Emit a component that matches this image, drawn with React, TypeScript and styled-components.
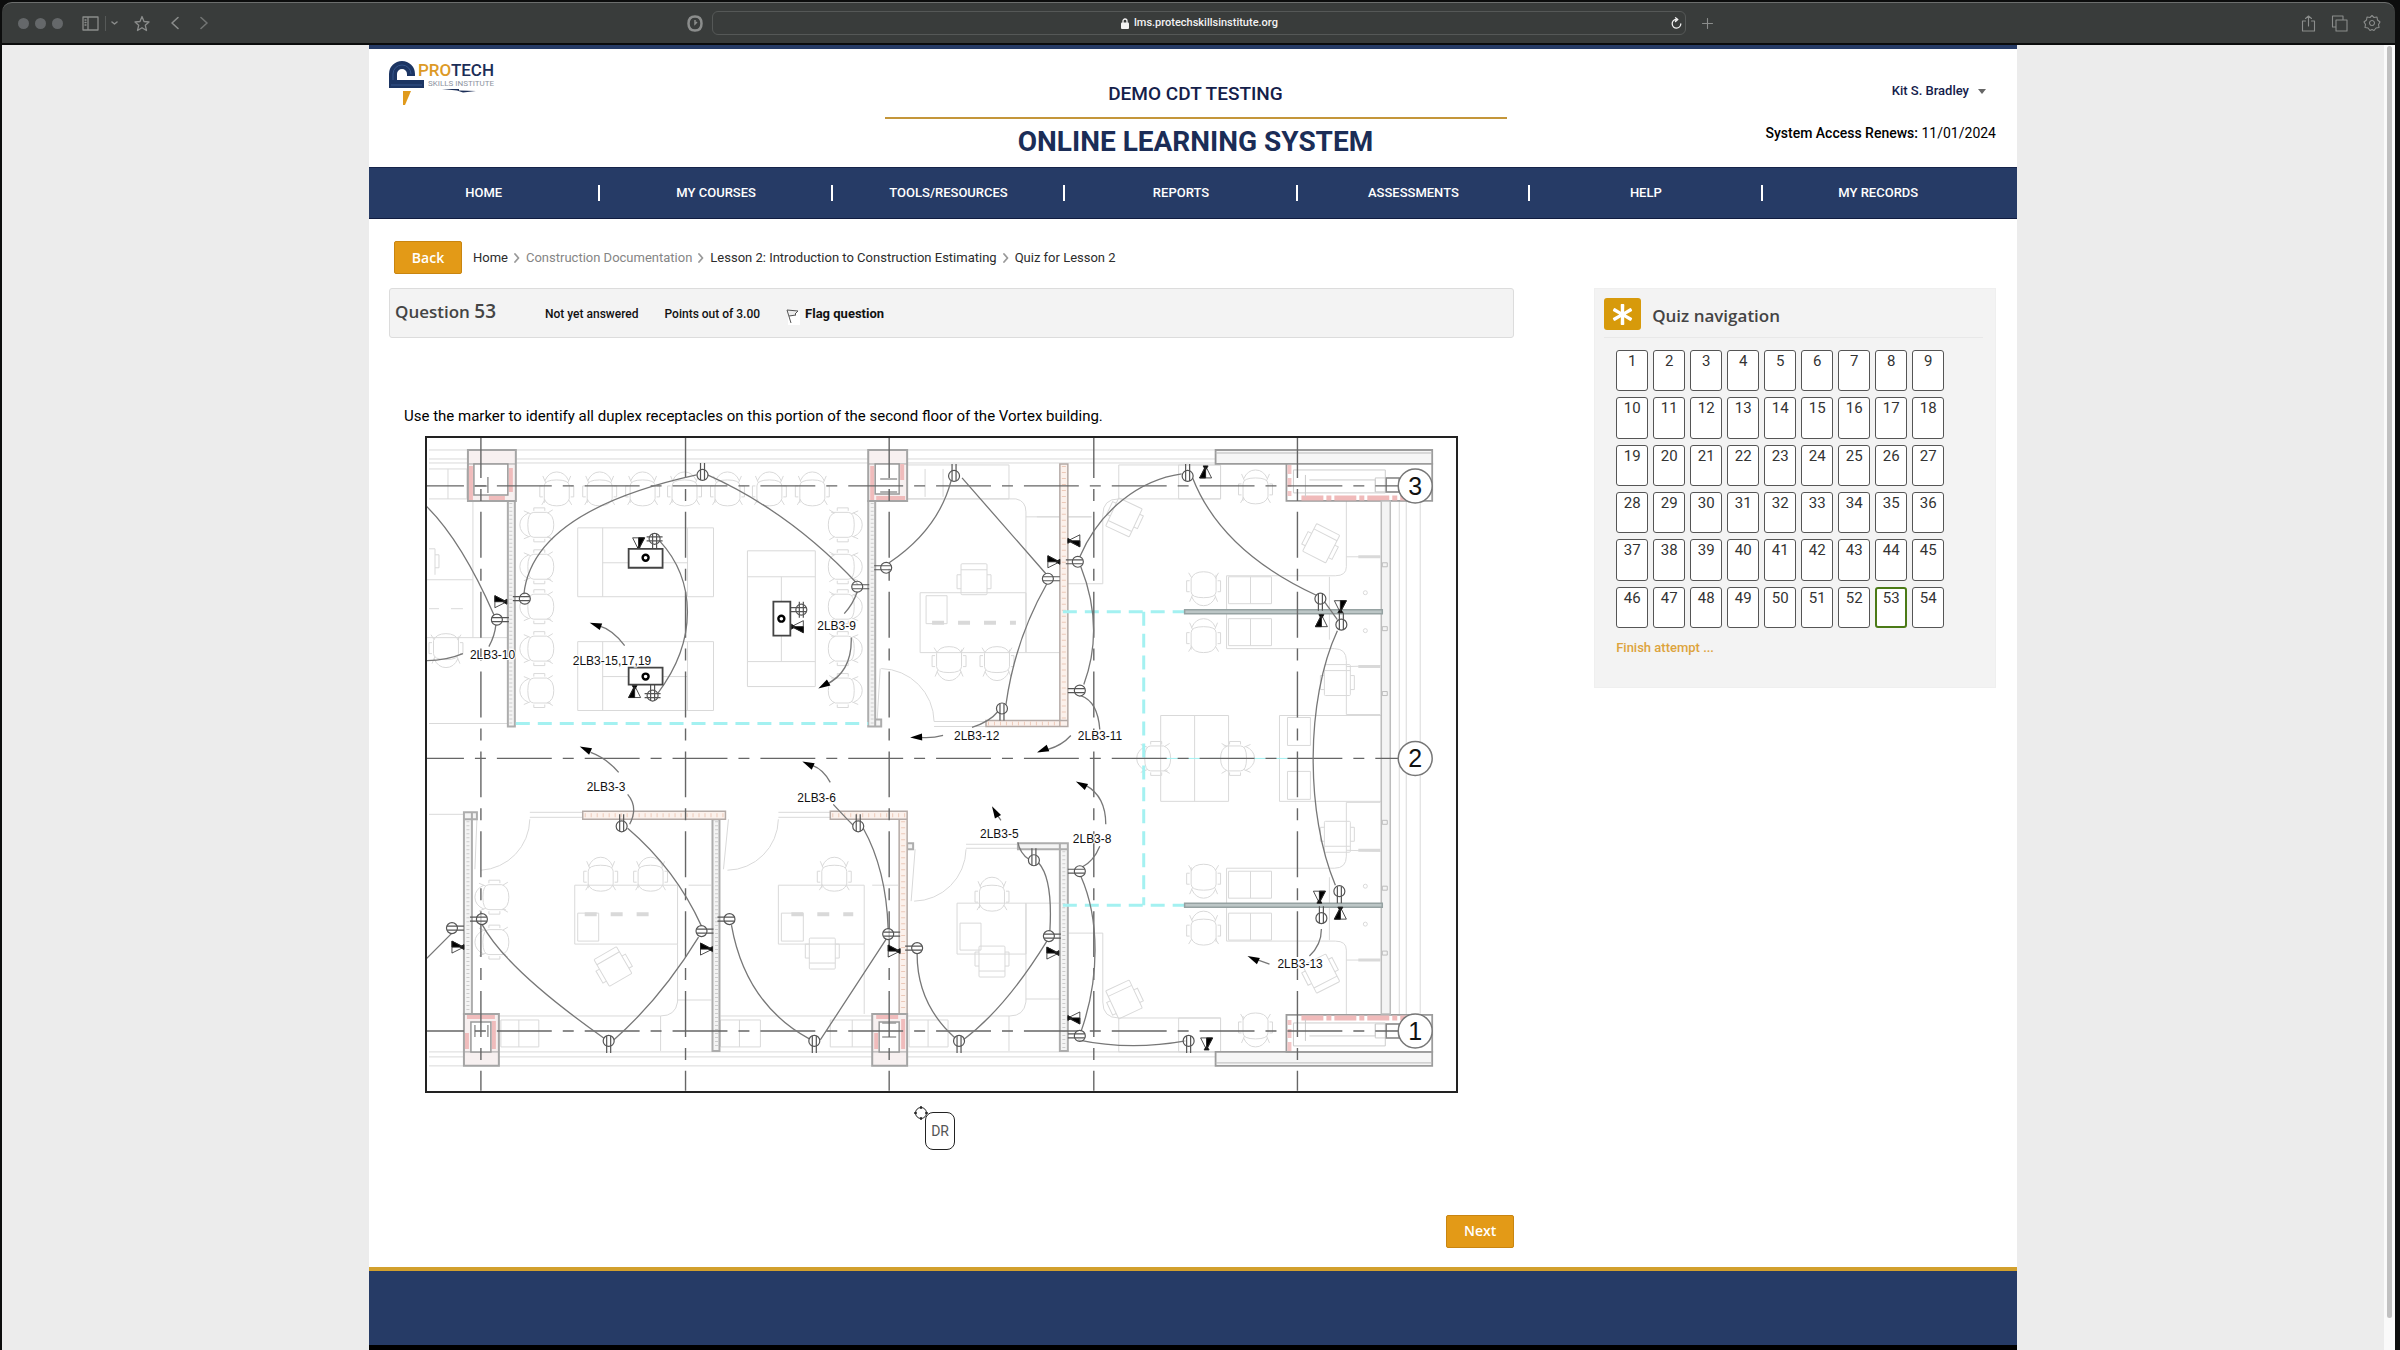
import React from "react";
import styled, { createGlobalStyle } from "styled-components";
import { FaAsterisk } from "react-icons/fa";

const navy = "#263b66";
const ink = "#14204a";
const amber = "#e39a17";
const roboto = `Roboto, "Liberation Sans", sans-serif`;
const openSans = `"Open Sans", "Noto Sans", sans-serif`;

const GlobalStyle = createGlobalStyle`
  *, *::before, *::after { box-sizing: border-box; }
  html, body { margin: 0; padding: 0; background: #0c0d0d; }
  body { font-family: ${roboto}; font-size: 14px; line-height: 20px; color: #222; }
  a { color: inherit; text-decoration: none; }
  button { font: inherit; cursor: pointer; }
  h1, h2, h3, p { margin: 0; }
`;

/* ---------- browser window ---------- */

const Window = styled.div`
  min-height: 100vh;
  padding: 2px 5px 0 2px;
  display: flex;
  flex-direction: column;
`;

const Toolbar = styled.header`
  height: 43px;
  display: grid;
  grid-template-columns: 1fr minmax(0, 1026px) 1fr;
  align-items: center;
  background: #393c3b;
  border-top: 1px solid #6c6e6d;
  border-bottom: 2px solid #0b0c0c;
  border-radius: 10px 10px 0 0;
  padding: 0 14px 0 16px;
  color: #8b8d8c;
`;

const ToolGroup = styled.div<{ $end?: boolean; $gap?: number }>`
  display: flex;
  align-items: center;
  justify-content: ${(p) => (p.$end ? "flex-end" : "flex-start")};
  gap: ${(p) => p.$gap ?? 0}px;
`;

const Dot = styled.span`
  width: 11px;
  height: 11px;
  border-radius: 50%;
  background: #65686a;
`;

const ToolButton = styled.button<{ $before?: number; $dim?: boolean }>`
  display: flex;
  padding: 0;
  border: 0;
  background: none;
  color: inherit;
  margin-left: ${(p) => p.$before ?? 0}px;
  opacity: ${(p) => (p.$dim ? 0.7 : 1)};
`;

const ToolDivider = styled.span`
  width: 1px;
  height: 15px;
  margin-left: 6px;
  background: #565958;
`;

const Address = styled.label`
  flex: 1;
  height: 24px;
  margin: 0 16px 0 9px;
  padding: 0 3px 0 0;
  display: flex;
  align-items: center;
  border: 1px solid #555857;
  border-radius: 6px;
  color: #f2f2f2;
`;

const AddressCentre = styled.span`
  flex: 1;
  display: flex;
  justify-content: center;
  align-items: center;
  gap: 5px;
  padding-left: 20px;
`;

const AddressInput = styled.input`
  width: 148px;
  padding: 0;
  border: 0;
  outline: 0;
  background: none;
  color: inherit;
  font: 500 11px/18px ${roboto};
`;

const Viewport = styled.div`
  flex: 1;
  display: grid;
  grid-template-columns: minmax(0, 1fr) 11px;
  background: #ececec;
`;

const ScrollTrack = styled.div`
  background: #fafafa;
  padding: 1px 3px 32px;
`;

const ScrollThumb = styled.div`
  height: 100%;
  border-radius: 3px;
  background: #c1c1c1;
`;

/* ---------- page ---------- */

const Page = styled.div`
  width: 100%;
  max-width: 1648px;
  margin: 0 auto;
  display: flex;
  flex-direction: column;
  background: #fff;
  border-top: 4px solid ${navy};
  border-bottom: 5px solid #000;
`;

const Masthead = styled.header`
  display: grid;
  grid-template-columns: 1fr minmax(0, 622px) 1fr;
  padding: 0 15px 9px 20px;
`;

const LogoLink = styled.a`
  padding-top: 12px;
  line-height: 0;
`;

const Titles = styled.div`
  padding-top: 33px;
  text-align: center;
`;

const OrgName = styled.h2`
  font: 500 19px/24px ${roboto};
  color: ${ink};
  padding-bottom: 11px;
  border-bottom: 2px solid #c4963a;
  margin-bottom: 7px;
`;

const SystemName = styled.h1`
  font: 700 28px/32px ${roboto};
  color: #1b2d57;
`;

const Account = styled.div`
  display: flex;
  flex-direction: column;
  align-items: flex-end;
  gap: 22px;
  padding: 32px 6px 0 0;
`;

const UserButton = styled.button`
  display: flex;
  align-items: center;
  gap: 9px;
  padding: 0;
  margin-right: 10px;
  border: 0;
  background: none;
  font: 500 13px/20px ${roboto};
  color: ${ink};
`;

const Renewal = styled.p`
  font: 400 14px/20px ${roboto};
  color: #000;
  b { font-weight: 500; }
`;

const NavBar = styled.nav`
  height: 52px;
  display: flex;
  padding-right: 21px;
  background: ${navy};
  border-top: 1px solid #16244a;
  border-bottom: 1px solid #101c40;
`;

const NavItem = styled.a`
  flex: 1;
  display: flex;
  align-items: center;
  font: 500 13px/20px ${roboto};
  color: #fff;
  text-align: center;
  &::after {
    content: "";
    width: 2px;
    height: 16px;
    margin-right: 1px;
    background: #fff;
  }
  &:last-child::after { background: transparent; }
  span { flex: 1; }
`;

const Main = styled.main`
  flex: 1;
  padding: 22px 21px 19px 20px;
`;

const CrumbRow = styled.div`
  display: flex;
  align-items: center;
  gap: 11px;
  padding-left: 5px;
  margin-bottom: 14px;
`;

const Action = styled.button`
  min-width: 68px;
  height: 33px;
  padding: 0 16px;
  border: 1px solid #c98510;
  border-radius: 2px;
  background: ${amber};
  color: #fff;
  font: 600 14px/20px ${openSans};
`;

const Crumbs = styled.ol`
  display: flex;
  align-items: center;
  gap: 6px;
  margin: 0;
  padding: 0;
  list-style: none;
  font: 400 13px/20px ${roboto};
`;

const Crumb = styled.li<{ $muted?: boolean }>`
  display: flex;
  align-items: center;
  gap: 6px;
  color: ${(p) => (p.$muted ? "#858585" : "#2c2c2c")};
  svg { color: #999; }
`;

const Columns = styled.div`
  display: grid;
  grid-template-columns: minmax(0, 2.8fr) minmax(0, 1fr);
  gap: 80px;
  align-items: start;
`;

const QuestionBar = styled.section`
  height: 50px;
  display: flex;
  align-items: center;
  padding: 2px 5px 0;
  background: #f3f3f3;
  border: 1px solid #dcdcdc;
  border-radius: 3px;
  font: 500 12px/20px ${roboto};
  color: #111;
`;

const QuestionTitle = styled.h3`
  width: 150px;
  padding-bottom: 6px;
  font: 600 17px/24px ${openSans};
  color: #444;
  strong { font-size: 19px; font-weight: 600; }
`;

const BarText = styled.span`
  margin-right: 26px;
`;

const FlagButton = styled.button`
  display: flex;
  align-items: center;
  gap: 5px;
  padding: 0;
  border: 0;
  background: none;
  font: 700 13px/20px ${roboto};
  color: #111;
  svg { margin-top: 4px; }
`;

const Prompt = styled.p`
  margin: 68px 0 10px 15px;
  font: 400 15px/20px ${roboto};
  color: #000;
`;

const Figure = styled.figure`
  margin: 0 56px 0 36px;
  border: 2px solid #222;
  line-height: 0;
  svg { width: 100%; height: auto; }
`;

const MarkerHome = styled.div`
  display: flex;
  justify-content: center;
  margin: 13px 56px 65px 36px;
  padding-right: 14px;
`;

const Marker = styled.button`
  display: flex;
  align-items: flex-start;
  padding: 0;
  border: 0;
  background: none;
  cursor: move;
  span {
    width: 30px;
    height: 38px;
    margin: 6px 0 0 -3px;
    border: 1px solid #222;
    border-radius: 8px;
    background: #fff;
    font: 400 14px/36px ${roboto};
    color: #555;
  }
`;

const NextRow = styled.div`
  display: flex;
  justify-content: flex-end;
`;

const QuizPanel = styled.aside`
  padding: 9px 12px 29px 9px;
  background: #f3f3f3;
  border: 1px solid #efefef;
`;

const PanelHead = styled.div`
  display: flex;
  align-items: center;
  gap: 11px;
  padding-bottom: 7px;
  margin-bottom: 12px;
  border-bottom: 1px solid #e8e8e8;
`;

const PanelIcon = styled.span`
  width: 37px;
  height: 32px;
  display: grid;
  place-items: center;
  border-radius: 3px;
  background: #d79a0b;
  color: #fff;
`;

const PanelTitle = styled.h3`
  padding-top: 4px;
  font: 600 17px/24px ${openSans};
  color: #444;
`;

const NumberGrid = styled.div`
  height: 278px;
  display: grid;
  grid-template-columns: repeat(9, 32px);
  grid-auto-rows: 1fr;
  gap: 6px 5px;
  margin: 0 0 9px 12px;
`;

const NumberLink = styled.a<{ $current?: boolean }>`
  border: ${(p) => (p.$current ? "2px solid #4b7a16" : "1px solid #555")};
  padding-top: ${(p) => (p.$current ? 0 : 1)}px;
  border-radius: 3px;
  background: #fff;
  font: 400 15px/18px ${roboto};
  color: #333;
  text-align: center;
`;

const FinishLink = styled.a`
  margin-left: 12px;
  font: 500 13px/20px ${roboto};
  color: #dda33c;
`;

const Footer = styled.footer`
  height: 78px;
  background: ${navy};
  border-top: 4px solid #d2a02d;
`;

/* ---------- floor plan ---------- */

type P = { x: number; y: number };
type Dir = "up" | "right" | "down" | "left";
const turn: Record<Dir, number> = { up: 0, right: 90, down: 180, left: 270 };

const Chair = ({ x, y, d = "up" }: P & { d?: Dir }) => (
  <g transform={`translate(${x} ${y}) rotate(${turn[d]})`}>
    <path d="M-12.5 13V-4Q-12.5-10 0-10T12.5-4V9Q10 16 0 16T-12.5 9" />
    <path d="M-12-9Q-8-18 0-18T12-9M-14-4h-3v11h3M14-4h3v11h-3M-14-14l3 7M14-14l-3 7M-15 15l3-5M15 15l-3-5" />
  </g>
);

const DeskChair = ({ x, y, r = 0 }: P & { r?: number }) => (
  <g transform={`translate(${x} ${y}) rotate(${r})`}>
    <rect x={-13} y={-15} width={26} height={31} rx={1} />
    <path d="M-13-9h26M-13-4h-4v14h4M13-4h4v14h-4" />
  </g>
);

const Outlet = ({ x, y, d, quad }: P & { d: Dir; quad?: boolean }) => (
  <g transform={`translate(${x} ${y}) rotate(${turn[d]})`}>
    <circle r={5.5} />
    <path d="M-2-12V5M2-12V5" />
    {quad && <path d="M-8-2H8M-8 2H8" />}
  </g>
);

const DataJack = ({ x, y, d }: P & { d: Dir }) => (
  <g transform={`translate(${x} ${y}) rotate(${turn[d]})`}>
    <path d="M0-6L-6 6H6Z" fill="#fff" strokeWidth={0.8} />
    <path d="M0-5L-6 6H0ZM-2.500-6H2.500L0-2Z" fill="#000" />
  </g>
);

const Arrow = ({ x, y, a }: P & { a: number }) => (
  <path d="M0 0L12-3.5V3.5Z" transform={`translate(${x} ${y}) rotate(${a})`} fill="#000" stroke="none" />
);

const rect = (x: number, y: number, x2: number, y2: number) => `M${x} ${y}H${x2}V${y2}H${x}Z`;

const chairs: [number, number, Dir?][] = [
  ...[556, 599, 642, 684, 727, 769, 812].map((x) => [x, 490] as [number, number]),
  ...[525, 567, 607, 649, 691].map((y) => [537, y, "left"] as [number, number, Dir]),
  ...[525, 567, 607, 649, 691].map((y) => [844, y, "right"] as [number, number, Dir]),
  [445, 650, "down"], [949, 663, "down"], [997, 663, "down"],
  [600, 876], [650, 876], [834, 876], [992, 896],
  [492, 898, "left"], [492, 943, "left"],
  [1155, 759, "left"], [1237, 759, "right"],
];

const outlets: [number, number, Dir, boolean?][] = [
  [702, 475, "up"], [524, 599, "left"], [496, 620, "right"], [654, 539, "down", true],
  [801, 610, "left", true], [652, 696, "up", true], [857, 587, "right"], [886, 568, "left"],
  [954, 476, "up"], [1188, 476, "up"], [1078, 562, "left"], [1048, 579, "right"],
  [1080, 691, "left"], [1002, 709, "down"], [1321, 599, "down"], [1342, 625, "up"],
  [621, 827, "up"], [858, 827, "up"], [481, 920, "left"], [451, 929, "right"],
  [701, 932, "right"], [729, 920, "left"], [888, 935, "right"], [608, 1042, "down"],
  [814, 1042, "down"], [917, 949, "left"], [959, 1042, "down"], [1034, 861, "up"],
  [1049, 937, "right"], [1080, 872, "left"], [1080, 1037, "left"], [1189, 1042, "down"],
  [1340, 892, "down"], [1322, 919, "up"],
];

const jacks: [number, number, Dir][] = [
  [638, 544, "down"], [500, 602, "right"], [797, 627, "left"], [634, 692, "up"],
  [1206, 472, "up"], [1074, 541, "left"], [1054, 562, "right"], [1322, 621, "up"],
  [1341, 607, "down"], [457, 948, "right"], [706, 950, "right"], [894, 952, "right"],
  [1053, 954, "right"], [1074, 1019, "left"], [1207, 1045, "down"], [1320, 898, "down"],
  [1341, 914, "up"],
];

const arrows: [number, number, number][] = [
  [818, 689, -30], [589, 623, 20], [910, 738, -2], [1037, 753, -22], [579, 747, 25],
  [802, 762, 25], [992, 807, 60], [1076, 782, 28], [1248, 957, 25],
];

const wires = [
  "M523 595C527 555 560 505 696 475", "M707 475Q790 512 858 585", "M857 592Q853 604 844 614",
  "M851 638Q852 672 826 685", "M659 541C695 580 698 640 657 694", "M624 646Q612 630 598 626",
  "M425 506Q460 540 493 615", "M495 625Q494 636 488 647M462 654Q445 661 425 661",
  "M889 563Q938 530 951 481", "M962 478L1046 574", "M1047 584Q1015 640 1006 705",
  "M998 712Q990 722 972 728M943 736Q932 739 920 738", "M1080 557C1100 510 1140 480 1182 474",
  "M1193 478Q1222 552 1318 596", "M1325 602L1338 620", "M1338 631C1306 700 1306 815 1336 886",
  "M1081 567Q1105 628 1084 685", "M1081 696Q1098 702 1100 730M1071 736Q1062 746 1048 750",
  "M627 795Q638 808 629 825M618 773Q606 759 590 753", "M627 829Q675 870 701 927",
  "M481 925Q505 970 603 1039", "M698 938Q660 1000 613 1041", "M731 926Q745 1005 809 1040",
  "M886 940L820 1041", "M863 829Q886 870 888 930", "M833 805Q845 818 853 826M830 783Q823 770 812 766",
  "M451 934L425 960", "M917 955Q917 1005 955 1039", "M1047 942Q1005 1010 963 1041",
  "M1018 843Q1020 854 1029 860M1039 864Q1053 880 1050 932M1001 821L996 814",
  "M1100 847Q1094 862 1082 868M1106 825Q1106 797 1086 786", "M1081 877C1100 920 1100 980 1081 1033",
  "M1078 1041Q1130 1052 1186 1042", "M1322 930Q1322 946 1310 957M1270 965L1256 960",
].join("");

const labels: [number, number, string][] = [
  [469, 659, "2LB3-10"], [572, 665, "2LB3-15,17,19"], [817, 630, "2LB3-9"], [954, 741, "2LB3-12"],
  [1078, 741, "2LB3-11"], [586, 792, "2LB3-3"], [797, 803, "2LB3-6"], [980, 839, "2LB3-5"],
  [1073, 844, "2LB3-8"], [1278, 969, "2LB3-13"],
];

/* Furniture of the open office; its lower half is the same block flipped about grid line 2. */
const OfficeHalf = () => (
  <g>
    <path d={rect(1119, 465, 1221, 499) + rect(1179, 465, 1221, 499) + "M1347 501V567Q1347 576 1336 576H1227V649H1335Q1347 649 1347 661V715M1103 584V515Q1103 499 1119 499M1068 584H1103M1330 577V640"} />
    <path d={rect(1229, 577, 1272, 604) + rect(1229, 619, 1272, 646) + "M1251 577V604M1251 619V646M1347 557H1381M1347 667L1381 666M1347 715H1381"} />
    <path d="M1359 557H1381M1359 667H1381" strokeWidth={3} />
    <path d={rect(1288, 718, 1311, 746)} />
    <circle cx={1366} cy={593} r={2} />
    <circle cx={1366} cy={631} r={2} />
    <Chair x={1204} y={588} d="down" />
    <Chair x={1204} y={637} />
    <Chair x={1256} y={488} />
    <DeskChair x={1124} y={518} r={205} />
    <DeskChair x={1322} y={543} r={27} />
    <DeskChair x={1338} y={680} />
  </g>
);

/* Right-hand exterior wall and corner pier, drawn once and flipped for the lower corner. */
const CornerPier = () => (
  <g>
    <path d={rect(1216, 450, 1433, 464)} fill="#f6f6f6" stroke="#9c9c9c" strokeWidth={1.8} />
    <path d="M1216 453H1433" stroke="#bbb" />
    <path d={rect(1287, 464, 1433, 501)} fill="#fff" stroke="#9c9c9c" strokeWidth={1.8} />
    <path d="M1290 465V496" stroke="#f3c6c6" strokeWidth={4} strokeDasharray="9 4" />
    <path d="M1302 498H1408" stroke="#f0baba" strokeWidth={5} strokeDasharray="22 3 5 3" />
    <path d={rect(1294, 470, 1386, 493) + "M1306 475V497M1310 480H1376V492M1376 478H1400V492H1376Z"} stroke="#ccc" />
    <path d="M1387 478H1400V492H1387Z" stroke="#888" strokeWidth={1.5} />
  </g>
);

const FloorPlan = () => (
  <svg viewBox="426 438 1031 654" role="img" aria-label="Second floor power plan of the Vortex building" fill="none" stroke="#8a8a8a" strokeWidth={1}>
    <g stroke="#d9d9d9">
      <path d="M428 450H1218M428 459H1218M428 463H1218M428 1053H1218M428 1058H1218M428 1067H1218" />
      <path d="M428 724H507M428 815H463M472 501V638M425 580H472M425 638H507M428 469H466V499H428M447 469V499" />
      <path d="M428 609H438M450 609H462M428 549H434V575M434 555H438V568H434" />
      <path d={rect(577, 528, 713, 597) + "M602 528V597M687 528V597M602 563H687"} />
      <path d={rect(577, 642, 713, 711) + "M602 642V711M687 642V711M602 677H687"} />
      <path d={rect(747, 551, 815, 687) + "M747 577H815M747 662H815M781 577V662"} />
      <path d={rect(907, 465, 1009, 499) + "M925 469V497M943 469V497M907 499H1016Q1026 501 1026 512V653" + rect(920, 593, 1026, 653) + rect(926, 596, 947, 624) + "M1026 653H1060"} />
      <path d="M1037 517H1091M1026 517H1092" />
      <path d={rect(574, 886, 677, 945) + rect(577, 914, 598, 942) + "M677 945V1003Q675 1017 660 1017H497M688 886H711M677 1001H711M660 1017V1052"} />
      <path d={rect(500, 1021, 538, 1048) + "M518 1021V1048" + rect(720, 1021, 760, 1048) + "M739 1021V1048" + rect(830, 1021, 872, 1048) + "M852 1021V1048M720 1017H872"} />
      <path d={rect(778, 886, 864, 945) + rect(781, 914, 803, 942) + "M864 945V1015M872 886H898"} />
      <path d={rect(957, 904, 1026, 955) + rect(960, 924, 981, 951) + "M1026 904V1003Q1024 1017 1010 1017H907M1026 904H1060M1026 1000H1060M1009 1017V1052"} />
      <path d={rect(909, 1021, 948, 1048) + "M928 1021V1048"} />
      <path d="M584 915H660M791 915H853M932 623H1016" strokeWidth={4} strokeDasharray="12 14" />
      <path d={rect(1161, 716, 1229, 802) + "M1195 716V802" + rect(1280, 716, 1382, 802)} />
      <path d="M1400 501V1015M1407 501V1015M1421 501V1015" />
      <path d="M880 669L877 720M881 669A54 54 0 0 1 934 722M934 722H986M934 727H986" />
      <path d="M476 820L474 870M480 871A52 52 0 0 0 529 820M529 813H582M529 818H582" />
      <path d="M728 820L723 870M727 871A52 52 0 0 0 778 820M778 813H830M778 818H830" />
      <path d="M915 850L911 902M914 902A53 53 0 0 0 966 850M966 845H1018M966 849H1018" />
      {chairs.map(([x, y, d], i) => <Chair key={i} x={x} y={y} d={d} />)}
      <DeskChair x={974} y={579} />
      <DeskChair x={612} y={967} r={-30} />
      <DeskChair x={822} y={955} r={180} />
      <DeskChair x={992} y={963} r={180} />
      <OfficeHalf />
      <g transform="matrix(1 0 0 -1 0 1518)"><OfficeHalf /></g>
    </g>

    <CornerPier />
    <g transform="matrix(1 0 0 -1 0 1517)"><CornerPier /></g>
    <g stroke="#bdbdbd" strokeWidth={1.5} fill="#f4f4f4">
      <path d={rect(1382, 501, 1391, 1015)} />
      <path d={[563, 627, 692, 821, 887, 952].map((y) => rect(1383, y, 1388, y + 4)).join("")} strokeWidth={1} />
    </g>

    <g stroke="#adadad" strokeWidth={2} fill="#f4f4f4">
      <path d={rect(507, 501, 514, 727) + rect(868, 501, 875, 727) + "M875 720H881V727H875"} />
      <path d={rect(463, 813, 471, 1015) + rect(463, 813, 476, 820) + rect(712, 820, 719, 1052)} />
      <path d={rect(1018, 844, 1068, 850) + rect(1060, 844, 1068, 1052) + rect(907, 844, 913, 850)} />
    </g>
    <g stroke="#b4aaa6" strokeWidth={1.5} fill="#fbf1ec">
      <path d={rect(1060, 464, 1068, 727) + rect(986, 721, 1068, 727)} />
      <path d={rect(582, 812, 725, 820) + rect(830, 812, 907, 820) + rect(899, 820, 907, 1015)} />
    </g>
    <path d="M1064 466V720M988 724H1062M584 816H724M832 816H905M903 822V1014" stroke="#edc9b8" strokeWidth={4} strokeDasharray="1 5" />
    <path d="M510 503V725M872 503V725M467 822V1014M716 822V1050M1064 852V1050" stroke="#ccc" strokeWidth={3} strokeDasharray="1 3" />

    <g stroke="#a5a5a5" strokeWidth={2} fill="#f7f0f0">
      <path d={rect(467, 450, 515, 501) + rect(868, 450, 907, 501) + rect(463, 1015, 498, 1067) + rect(872, 1015, 907, 1067)} />
      <path d="M467 464H515M868 464H907M463 1053H498M872 1053H907" strokeWidth={1} />
    </g>
    <path d="M470 466V500M510 468V492M488 498H504M872 466V500M902 464V480M876 498H905M466 1034V1050M493 1022V1050M466 1018H494M876 1034V1050M903 1020V1050M876 1018H898" stroke="#f0bcbc" strokeWidth={4} />
    <path d={rect(473, 464, 507, 495) + rect(875, 464, 899, 494) + rect(470, 1023, 490, 1053) + rect(879, 1023, 899, 1053)} fill="#fff" stroke="#999" strokeWidth={1.5} />
    <path d="M473 486H487M487 477V493M880 479H897M880 492H897M474 1026V1038M487 1026V1038M882 1024H896M882 1038H896" stroke="#999" strokeWidth={1.5} />

    <g stroke="#a4f1f1" strokeWidth={3} strokeDasharray="14 8">
      <path d="M515 724H868M1063 612H1185M1063 906H1185M1144 612V906" />
      <path d="M1143 759H1300" strokeWidth={1} />
    </g>
    <path d={rect(1185, 610, 1383, 614) + rect(1185, 904, 1383, 908)} fill="#bcc6c6" stroke="#96a2a2" strokeWidth={1.5} />

    <g stroke="#666" strokeWidth={1.4}>
      <path d="M480 436V1092M685 436V1092M889 436V1092M1094 436V1092M1298 436V1092" strokeDasharray="46 11 12 11" strokeDashoffset={4} />
      <path d="M425 486H1399M425 759H1399M425 1032H1399" strokeDasharray="55 11 11 11" strokeDashoffset={17} />
    </g>

    <path d={wires} stroke="#777" strokeWidth={1.3} />
    <g stroke="#555" strokeWidth={1.2} fill="rgba(255,255,255,0.6)">
      {outlets.map(([x, y, d, quad], i) => <Outlet key={i} x={x} y={y} d={d} quad={quad} />)}
    </g>
    <g stroke="#222">{jacks.map(([x, y, d], i) => <DataJack key={i} x={x} y={y} d={d} />)}</g>
    {arrows.map(([x, y, a], i) => <Arrow key={i} x={x} y={y} a={a} />)}

    <g stroke="#444" strokeWidth={1.8} fill="#fff">
      <path d={rect(628, 549, 662, 568) + rect(628, 668, 662, 685) + rect(773, 602, 790, 636)} />
      {[[645, 558], [645, 677], [781, 619]].map(([x, y]) => <circle key={y} cx={x} cy={y} r={3} stroke="#000" strokeWidth={2.4} />)}
    </g>

    <g fill="#111" stroke="#fff" strokeWidth={2} paintOrder="stroke" fontFamily='"Liberation Sans", Arial, sans-serif' fontSize={12}>
      {labels.map(([x, y, t]) => <text key={t} x={x} y={y}>{t}</text>)}
    </g>
    {[[486, "3"], [759, "2"], [1032, "1"]].map(([y, n]) => (
      <g key={n}>
        <circle cx={1416} cy={y} r={17} fill="#fff" stroke="#777" strokeWidth={1.5} />
        <text x={1416} y={Number(y) + 9} textAnchor="middle" fill="#111" stroke="none" fontFamily='"Liberation Sans", Arial, sans-serif' fontSize={25}>{n}</text>
      </g>
    ))}
  </svg>
);

/* ---------- small icons ---------- */

const Icon = ({ w, h, d, s = 1.3 }: { w: number; h: number; d: string; s?: number }) => (
  <svg width={w} height={h} viewBox={`0 0 ${w} ${h}`} fill="none" stroke="currentColor" strokeWidth={s} strokeLinejoin="round" strokeLinecap="round" aria-hidden="true">
    <path d={d} />
  </svg>
);

const Logo = () => (
  <svg width="106" height="46" viewBox="0 0 106 46" role="img" aria-label="ProTech Skills Institute">
    <path d="M0 27V13A13 13 0 0 1 26 13V15H18V13A5 5 0 0 0 8 13V19H35V27Z" fill="#1c3563" />
    <path d="M2 24H33M4 19V13A9 9 0 0 1 22 13" fill="none" stroke="#34548a" strokeWidth="1" />
    <path d="M14 30H22L16 44H14Z" fill="#e09a1c" />
    <g fontFamily='Roboto, sans-serif' fontWeight="500">
      <text x="29" y="15" fontSize="17" fill="#dd9a26">PRO<tspan fill="#1b2d57">TECH</tspan></text>
      <text x="39" y="25" fontSize="8" fontWeight="400" fill="#8d93a0">SKILLS INSTITUTE</text>
    </g>
    <path d="M53 28H70V29.500L87 30L74 31.500L68 29.500Z" fill="#1b2d57" />
  </svg>
);

const navItems = ["HOME", "MY COURSES", "TOOLS/RESOURCES", "REPORTS", "ASSESSMENTS", "HELP", "MY RECORDS"];
const crumbs = ["Home", "Construction Documentation", "Lesson 2: Introduction to Construction Estimating", "Quiz for Lesson 2"];
const currentQuestion = 53;
const gear = "M9 1.500L11 3.500L14 3L14.500 6L17 8L15.500 10.500L16 13.500L13 14L11 16.500L9 15.500L7 16.500L5 14L2 13.500L2.500 10.500L1 8L3.500 6L4 3L7 3.500ZM9 6.500A2.500 2.500 0 1 0 9.010 6.500";

export default function App() {
  return (
    <>
      <GlobalStyle />
      <Window>
        <Toolbar>
          <ToolGroup>
            <ToolGroup $gap={6}><Dot /><Dot /><Dot /></ToolGroup>
            <ToolButton aria-label="Sidebar" $before={19}><Icon w={17} h={15} d="M1 1H16V14H1ZM6 1V14M3 4H4M3 6.500H4M3 9H4" /></ToolButton>
            <ToolDivider />
            <ToolButton aria-label="Tab groups" $before={5}><Icon w={7} h={6} d="M1 2L3.500 4L6 2" s={1.5} /></ToolButton>
            <ToolButton aria-label="Bookmarks" $before={16}><Icon w={16} h={17} d="M8 1.500L10 6.500L15 7L11.300 10.300L12.500 15.500L8 12.700L3.500 15.500L4.700 10.300L1 7L6 6.500Z" /></ToolButton>
            <ToolButton aria-label="Back" $before={19}><Icon w={12} h={14} d="M9 1.500L3 7L9 12.500" s={1.6} /></ToolButton>
            <ToolButton aria-label="Forward" $before={17} $dim><Icon w={12} h={14} d="M3 1.500L9 7L3 12.500" s={1.6} /></ToolButton>
          </ToolGroup>
          <ToolGroup>
            <ToolButton aria-label="Privacy report">
              <svg width="16" height="17" viewBox="0 0 16 17" aria-hidden="true">
                <path d="M8 1.500C12 1.500 14.500 4 14.500 8.500S12 15.500 8 15.500S1.500 13 1.500 8.500S4 1.500 8 1.500Z" fill="none" stroke="currentColor" strokeWidth="2.500" />
                <path d="M8 5V9L10 7" fill="none" stroke="currentColor" strokeWidth="1.500" />
              </svg>
            </ToolButton>
            <Address>
              <AddressCentre>
                <svg width="8" height="11" viewBox="0 0 8 11" aria-hidden="true">
                  <rect y="4.500" width="8" height="6.500" rx="1" fill="currentColor" />
                  <path d="M2 5V3A2 2 0 0 1 6 3V5" fill="none" stroke="currentColor" strokeWidth="1.300" />
                </svg>
                <AddressInput aria-label="Address" defaultValue="lms.protechskillsinstitute.org" />
              </AddressCentre>
              <ToolButton aria-label="Reload"><Icon w={11} h={13} d="M5 2.500A4.300 4.300 0 1 0 9.800 7M4.500 0.800L6.800 2.600L4.500 4.600" /></ToolButton>
            </Address>
            <ToolButton aria-label="New tab"><Icon w={11} h={11} d="M5.500 0.500V10.500M0.500 5.500H10.500" s={1.1} /></ToolButton>
          </ToolGroup>
          <ToolGroup $end $gap={15}>
            <ToolButton aria-label="Share"><Icon w={15} h={17} d="M4.500 6H1.500V16H13.500V6H10.500M7.500 11V1M4.500 3.500L7.500 1L10.500 3.500" s={1.1} /></ToolButton>
            <ToolButton aria-label="Tabs"><Icon w={17} h={17} d="M5 5H16V16H5ZM5 12H1.500V1H12V5" s={1.1} /></ToolButton>
            <ToolButton aria-label="Settings"><Icon w={18} h={18} d={gear} s={1.1} /></ToolButton>
          </ToolGroup>
        </Toolbar>

        <Viewport>
          <Page>
            <Masthead>
              <LogoLink href="#home"><Logo /></LogoLink>
              <Titles>
                <OrgName>DEMO CDT TESTING</OrgName>
                <SystemName>ONLINE LEARNING SYSTEM</SystemName>
              </Titles>
              <Account>
                <UserButton>
                  Kit S. Bradley
                  <svg width="8" height="5" viewBox="0 0 8 5" aria-hidden="true"><path d="M0 0H8L4 5Z" fill="#666" /></svg>
                </UserButton>
                <Renewal><b>System Access Renews:</b> 11/01/2024</Renewal>
              </Account>
            </Masthead>

            <NavBar aria-label="Main">
              {navItems.map((item) => <NavItem key={item} href="#nav"><span>{item}</span></NavItem>)}
            </NavBar>

            <Main>
              <CrumbRow>
                <Action>Back</Action>
                <Crumbs>
                  {crumbs.map((crumb, i) => (
                    <Crumb key={crumb} $muted={i === 1}>
                      {i > 0 && <Icon w={6} h={10} d="M1 1L4.500 5L1 9" s={1.8} />}
                      <a href="#crumb">{crumb}</a>
                    </Crumb>
                  ))}
                </Crumbs>
              </CrumbRow>

              <Columns>
                <div>
                  <QuestionBar>
                    <QuestionTitle>Question <strong>53</strong></QuestionTitle>
                    <BarText>Not yet answered</BarText>
                    <BarText>Points out of 3.00</BarText>
                    <FlagButton>
                      <svg width="14" height="18" viewBox="0 0 14 18" aria-hidden="true">
                        <path d="M2 4H14V18H2Z" fill="#fff" />
                        <path d="M1 3L5 16M1 3L12 4L9 7L10 8L3 9" fill="#eee" stroke="#555" />
                      </svg>
                      Flag question
                    </FlagButton>
                  </QuestionBar>
                  <Prompt>Use the marker to identify all duplex receptacles on this portion of the second floor of the Vortex building.</Prompt>
                  <Figure><FloorPlan /></Figure>
                  <MarkerHome>
                    <Marker>
                      <svg width="14" height="14" viewBox="0 0 14 14" fill="none" stroke="#222" aria-hidden="true">
                        <circle cx="7" cy="7" r="5.500" />
                        <path d="M7 0V3M7 11V14M0 7H3M11 7H14" strokeWidth="1.500" />
                      </svg>
                      <span>DR</span>
                    </Marker>
                  </MarkerHome>
                  <NextRow><Action>Next</Action></NextRow>
                </div>

                <QuizPanel>
                  <PanelHead>
                    <PanelIcon><FaAsterisk size={21} /></PanelIcon>
                    <PanelTitle>Quiz navigation</PanelTitle>
                  </PanelHead>
                  <NumberGrid>
                    {Array.from({ length: 54 }, (_, i) => i + 1).map((n) => (
                      <NumberLink key={n} href={`#q${n}`} $current={n === currentQuestion}>{n}</NumberLink>
                    ))}
                  </NumberGrid>
                  <FinishLink href="#finish">Finish attempt ...</FinishLink>
                </QuizPanel>
              </Columns>
            </Main>
            <Footer />
          </Page>
          <ScrollTrack><ScrollThumb /></ScrollTrack>
        </Viewport>
      </Window>
    </>
  );
}
